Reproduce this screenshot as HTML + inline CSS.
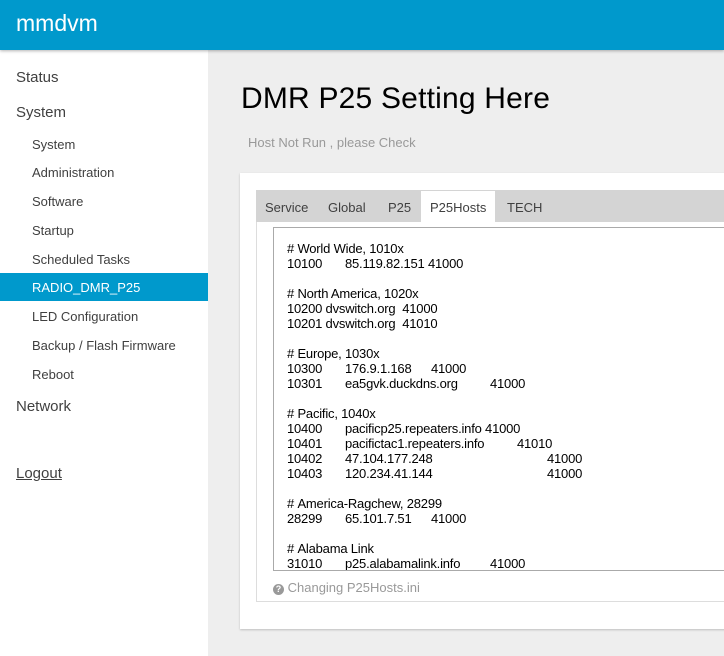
<!DOCTYPE html>
<html><head><meta charset="utf-8"><style>
*{margin:0;padding:0;box-sizing:border-box}
body{width:724px;height:656px;overflow:hidden;background:#eeeeee;font-family:"Liberation Sans","Noto Sans CJK SC",sans-serif;position:relative}
.hdr{position:absolute;left:0;top:0;width:724px;height:50px;background:#0099cc;box-shadow:0 1px 3px rgba(0,0,0,.3);z-index:2}
.hdr span{position:absolute;left:16px;top:10px;color:#fff;font-size:23px}
.side{position:absolute;left:0;top:50px;width:208px;height:606px;background:#fff}
.a{position:absolute;left:16px;font-size:15px;color:#404040}
.b{position:absolute;left:0;width:208px;height:28px;line-height:30px;padding-left:32px;font-size:13px;color:#404040}
.act{background:#0099cc;color:#fff}
.t{position:absolute;font-size:13px;letter-spacing:-0.2px;color:#000;white-space:nowrap}
</style></head><body>
<div class="hdr"><span>mmdvm</span></div>
<div class="side">
<div class="a" style="top:19px">Status</div>
<div class="a" style="top:54px">System</div>
<div class="b" style="top:80px">System</div>
<div class="b" style="top:108px">Administration</div>
<div class="b" style="top:137px">Software</div>
<div class="b" style="top:166px">Startup</div>
<div class="b" style="top:195px">Scheduled Tasks</div>
<div class="b act" style="top:223px">RADIO_DMR_P25</div>
<div class="b" style="top:252px">LED Configuration</div>
<div class="b" style="top:281px">Backup / Flash Firmware</div>
<div class="b" style="top:310px">Reboot</div>
<div class="a" style="top:348px">Network</div>
<div class="a" style="top:415px;text-decoration:underline">Logout</div>
</div>
<div style="position:absolute;left:241px;top:82px;font-size:30px;letter-spacing:0.2px;color:#000">DMR P25 Setting Here</div>
<div style="position:absolute;left:248px;top:135px;font-size:13px;color:#999">Host Not Run , please Check</div>
<div style="position:absolute;left:240px;top:173px;width:500px;height:456px;background:#fff;box-shadow:0 1px 2px rgba(0,0,0,.2)"></div>
<div style="position:absolute;left:256px;top:190px;width:480px;height:412px;border:1px solid #ddd;border-top:none"></div>
<div style="position:absolute;left:256px;top:190px;width:480px;height:32px;background:#d4d4d4;font-size:13px;color:#404040">
<span style="position:absolute;left:9px;top:10px">Service</span>
<span style="position:absolute;left:72px;top:10px">Global</span>
<span style="position:absolute;left:132px;top:10px">P25</span>
<span style="position:absolute;left:165px;top:1px;width:74px;height:31px;background:#fff"></span>
<span style="position:absolute;left:174px;top:10px">P25Hosts</span>
<span style="position:absolute;left:251px;top:10px">TECH</span>
</div>
<div style="position:absolute;left:273px;top:227px;width:470px;height:344px;border:1px solid #aaa;background:#fff"></div>
<div class="t" style="left:287px;top:241px">#&nbsp;World Wide, 1010x</div>
<div class="t" style="left:287px;top:256px">10100</div><div class="t" style="left:345px;top:256px">85.119.82.151 41000</div>
<div class="t" style="left:287px;top:286px">#&nbsp;North America, 1020x</div>
<div class="t" style="left:287px;top:301px">10200 dvswitch.org&nbsp; 41000</div>
<div class="t" style="left:287px;top:316px">10201 dvswitch.org&nbsp; 41010</div>
<div class="t" style="left:287px;top:346px">#&nbsp;Europe, 1030x</div>
<div class="t" style="left:287px;top:361px">10300</div><div class="t" style="left:345px;top:361px">176.9.1.168</div><div class="t" style="left:431px;top:361px">41000</div>
<div class="t" style="left:287px;top:376px">10301</div><div class="t" style="left:345px;top:376px">ea5gvk.duckdns.org</div><div class="t" style="left:490px;top:376px">41000</div>
<div class="t" style="left:287px;top:406px">#&nbsp;Pacific, 1040x</div>
<div class="t" style="left:287px;top:421px">10400</div><div class="t" style="left:345px;top:421px">pacificp25.repeaters.info 41000</div>
<div class="t" style="left:287px;top:436px">10401</div><div class="t" style="left:345px;top:436px">pacifictac1.repeaters.info</div><div class="t" style="left:517px;top:436px">41010</div>
<div class="t" style="left:287px;top:451px">10402</div><div class="t" style="left:345px;top:451px">47.104.177.248</div><div class="t" style="left:547px;top:451px">41000</div>
<div class="t" style="left:287px;top:466px">10403</div><div class="t" style="left:345px;top:466px">120.234.41.144</div><div class="t" style="left:547px;top:466px">41000</div>
<div class="t" style="left:287px;top:496px">#&nbsp;America-Ragchew, 28299</div>
<div class="t" style="left:287px;top:511px">28299</div><div class="t" style="left:345px;top:511px">65.101.7.51</div><div class="t" style="left:431px;top:511px">41000</div>
<div class="t" style="left:287px;top:541px">#&nbsp;Alabama Link</div>
<div class="t" style="left:287px;top:556px;height:14px;overflow:hidden">31010</div><div class="t" style="left:345px;top:556px;height:14px;overflow:hidden">p25.alabamalink.info</div><div class="t" style="left:490px;top:556px;height:14px;overflow:hidden">41000</div>
<div style="position:absolute;left:273px;top:580px;font-size:13px;color:#999;line-height:16px"><span style="display:inline-block;width:11px;height:11px;border-radius:50%;background:#999;color:#fff;font-size:9px;font-weight:bold;text-align:center;line-height:11px;vertical-align:0">?</span> Changing P25Hosts.ini</div>
</body></html>
